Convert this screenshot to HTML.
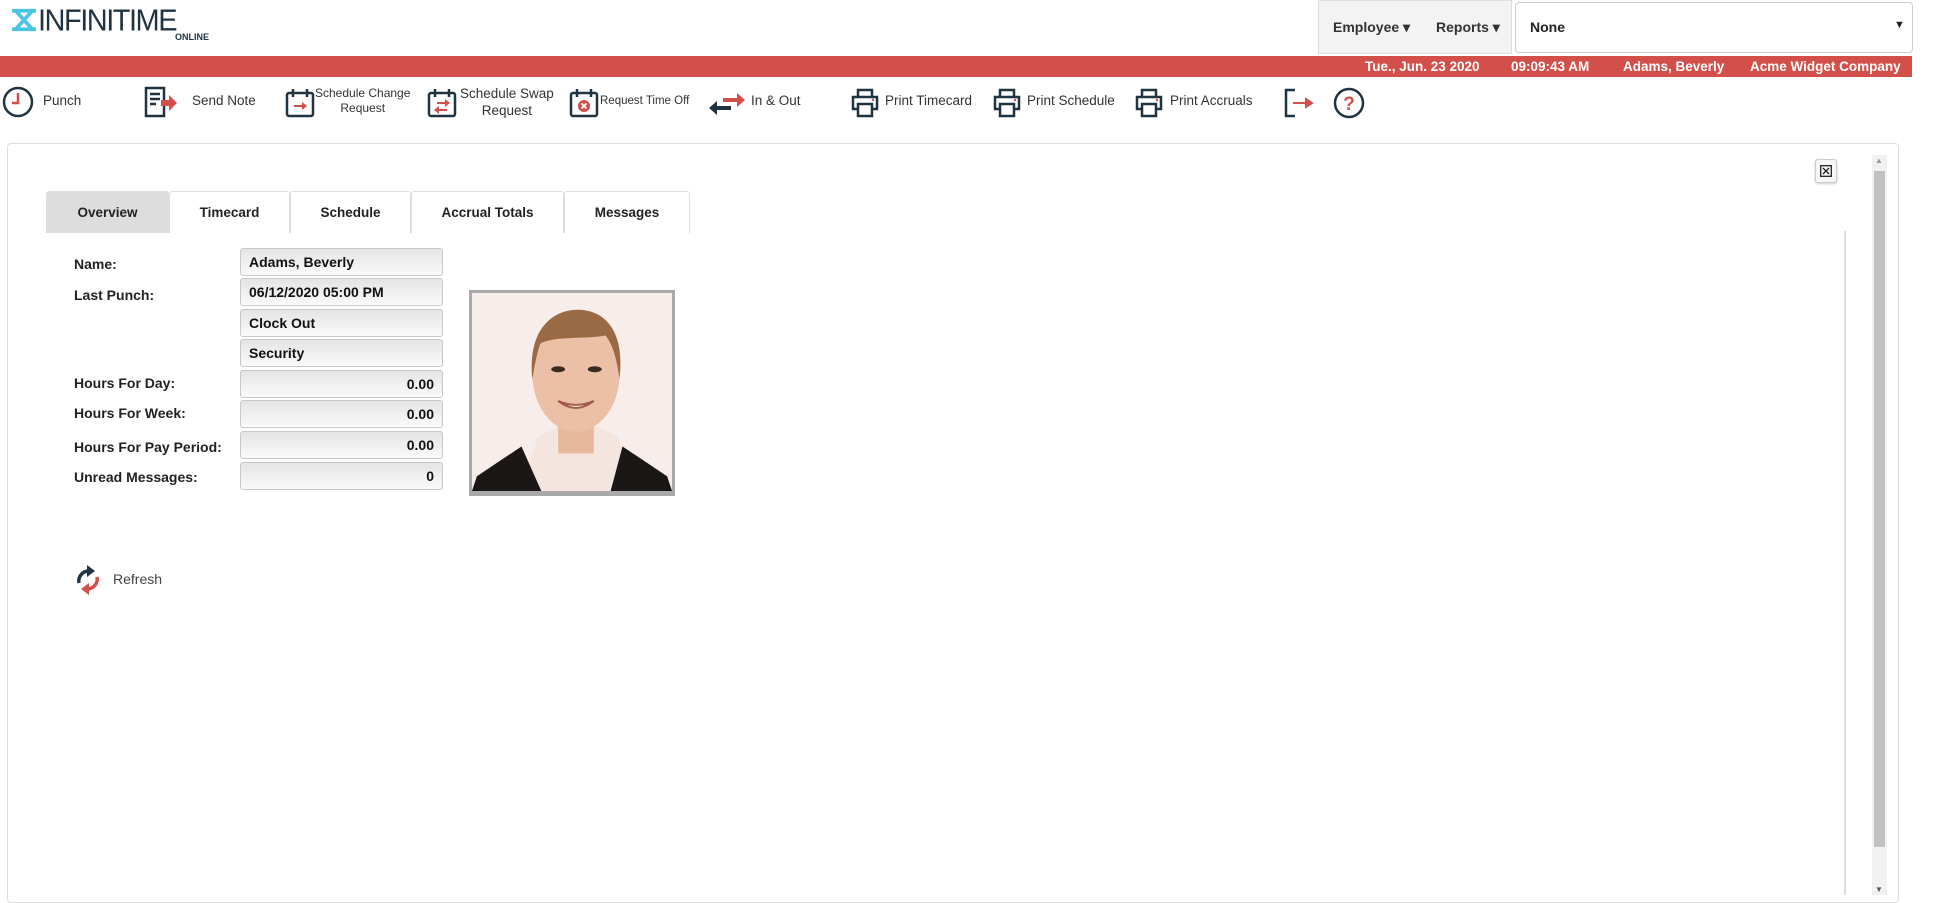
<!DOCTYPE html>
<html><head><meta charset="utf-8">
<style>
*{box-sizing:border-box;margin:0;padding:0}
body{width:1935px;height:895px;overflow:hidden;background:#fff;font-family:"Liberation Sans",sans-serif;color:#222;position:relative}
.a{position:absolute}
.tb{font-size:13.5px;color:#333;white-space:nowrap}
.lbl{position:absolute;left:74px;font-size:14px;font-weight:bold;color:#222}
.fld{position:absolute;left:240px;width:203px;height:28px;border:1px solid #c8c8c8;border-radius:3px;background:linear-gradient(#e4e4e4,#fafafa);font-size:14px;font-weight:bold;line-height:26px;padding:0 8px;color:#111}
.r{text-align:right}
.tab{position:absolute;top:191px;height:42px;border:1px solid #ddd;border-bottom:none;border-radius:3px 3px 0 0;font-size:13.5px;font-weight:bold;text-align:center;line-height:42px;background:#fff}
svg.i{position:absolute}
</style></head><body>
<!-- logo -->
<div class="a" style="left:10px;top:8px;">
<svg width="28" height="24" viewBox="0 0 30 26"><path d="M2 3h26M2 23h26M6 3l9 10 9-10M6 23l9-10 9 10" stroke="#4cc3e6" stroke-width="4" fill="none"/></svg>
</div>
<div class="a" style="left:38px;top:5px;font-size:29px;color:#1f3340;letter-spacing:-1.5px;transform:scaleY(1.05)">INFINITIME</div>
<div class="a" style="left:175px;top:32px;font-size:9px;font-weight:bold;color:#1f3340">ONLINE</div>
<!-- header nav -->
<div class="a" style="left:1318px;top:0;width:194px;height:54px;background:#f3f3f3;border:1px solid #ddd"></div>
<div class="a" style="left:1333px;top:19px;font-size:14px;font-weight:bold;color:#333">Employee ▾</div>
<div class="a" style="left:1436px;top:19px;font-size:14px;font-weight:bold;color:#333">Reports ▾</div>
<div class="a" style="left:1515px;top:2px;width:398px;height:51px;border:1px solid #ccc;border-radius:4px"></div>
<div class="a" style="left:1530px;top:19px;font-size:14px;font-weight:bold;color:#222">None</div>
<div class="a" style="left:1894px;top:19px;font-size:11px;color:#222">▼</div>
<!-- red bar -->
<div class="a" style="left:0;top:56px;width:1912px;height:21px;background:#d24f4a"></div>
<div class="a" style="left:1365px;top:59px;font-size:13.5px;font-weight:bold;color:#fff;white-space:nowrap">Tue., Jun. 23 2020</div>
<div class="a" style="left:1511px;top:59px;font-size:13.5px;font-weight:bold;color:#fff">09:09:43 AM</div>
<div class="a" style="left:1623px;top:59px;font-size:13.5px;font-weight:bold;color:#fff">Adams, Beverly</div>
<div class="a" style="left:1750px;top:59px;font-size:13.5px;font-weight:bold;color:#fff">Acme Widget Company</div>
<!-- toolbar -->
<svg class="i" style="left:2px;top:86px" width="32" height="32" viewBox="0 0 32 32"><circle cx="16" cy="16" r="14" fill="none" stroke="#1f3340" stroke-width="2.5"/><path d="M16 7v10h-6" stroke="#d24f4a" stroke-width="2.5" fill="none"/></svg>
<div class="a tb" style="left:43px;top:93px">Punch</div>
<svg class="i" style="left:143px;top:86px" width="40" height="32" viewBox="0 0 40 32"><path d="M3 2h18v28H3z" fill="none" stroke="#1f3340" stroke-width="2.5"/><path d="M7 8h10M7 13h10M7 18h6" stroke="#1f3340" stroke-width="2.5"/><path d="M18 14h8v-5l8 8-8 8v-5h-8z" fill="#d24f4a"/></svg>
<div class="a tb" style="left:192px;top:93px">Send Note</div>
<svg class="i" style="left:285px;top:88px" width="30" height="30" viewBox="0 0 30 30"><rect x="2" y="5" width="26" height="23" rx="2" fill="none" stroke="#1f3340" stroke-width="2.5"/><path d="M8 1v8M22 1v8" stroke="#1f3340" stroke-width="2.5"/><path d="M9 17h8v-3l5 4-5 4v-3H9z" fill="#d24f4a"/></svg>
<div class="a tb" style="left:315px;top:86px;font-size:12px;text-align:center;line-height:15px">Schedule Change<br>Request</div>
<svg class="i" style="left:427px;top:88px" width="30" height="30" viewBox="0 0 30 30"><rect x="2" y="5" width="26" height="23" rx="2" fill="none" stroke="#1f3340" stroke-width="2.5"/><path d="M8 1v8M22 1v8" stroke="#1f3340" stroke-width="2.5"/><path d="M10 14h8v-3l5 4-5 4v-3h-8zM20 23h-8v3l-5-4 5-4v3h8z" fill="#d24f4a"/></svg>
<div class="a tb" style="left:460px;top:85px;text-align:center;line-height:17px">Schedule Swap<br>Request</div>
<svg class="i" style="left:569px;top:88px" width="30" height="30" viewBox="0 0 30 30"><rect x="2" y="5" width="26" height="23" rx="2" fill="none" stroke="#1f3340" stroke-width="2.5"/><path d="M8 1v8M22 1v8" stroke="#1f3340" stroke-width="2.5"/><circle cx="15" cy="18" r="6" fill="#d24f4a"/><path d="M12.5 15.5l5 5M17.5 15.5l-5 5" stroke="#fff" stroke-width="1.8"/></svg>
<div class="a tb" style="left:600px;top:95px;font-size:11.5px">Request Time Off</div>
<svg class="i" style="left:709px;top:92px" width="36" height="24" viewBox="0 0 36 24"><path d="M14 6h14V1l8 7-8 7v-5H14z" fill="#d24f4a"/><path d="M22 14H8V9l-8 7 8 7v-5h14z" fill="#1f3340"/></svg>
<div class="a tb" style="left:751px;top:93px">In &amp; Out</div>
<svg class="i" style="left:850px;top:87px" width="30" height="32" viewBox="0 0 30 32"><path d="M8 9V3h14v6M8 22H3V10h24v12h-5" fill="none" stroke="#1f3340" stroke-width="2.5"/><rect x="8" y="17" width="14" height="12" fill="none" stroke="#1f3340" stroke-width="2.5"/><circle cx="23" cy="13" r="1.2" fill="#d24f4a"/></svg>
<div class="a tb" style="left:885px;top:93px">Print Timecard</div>
<svg class="i" style="left:992px;top:87px" width="30" height="32" viewBox="0 0 30 32"><path d="M8 9V3h14v6M8 22H3V10h24v12h-5" fill="none" stroke="#1f3340" stroke-width="2.5"/><rect x="8" y="17" width="14" height="12" fill="none" stroke="#1f3340" stroke-width="2.5"/><circle cx="23" cy="13" r="1.2" fill="#d24f4a"/></svg>
<div class="a tb" style="left:1027px;top:93px">Print Schedule</div>
<svg class="i" style="left:1134px;top:87px" width="30" height="32" viewBox="0 0 30 32"><path d="M8 9V3h14v6M8 22H3V10h24v12h-5" fill="none" stroke="#1f3340" stroke-width="2.5"/><rect x="8" y="17" width="14" height="12" fill="none" stroke="#1f3340" stroke-width="2.5"/><circle cx="23" cy="13" r="1.2" fill="#d24f4a"/></svg>
<div class="a tb" style="left:1170px;top:93px">Print Accruals</div>
<svg class="i" style="left:1284px;top:88px" width="30" height="30" viewBox="0 0 30 30"><path d="M11 2H2v26h9" fill="none" stroke="#1f3340" stroke-width="2.5"/><path d="M9 15h13v-4l6 4-6 4v-4" fill="#d24f4a" stroke="#d24f4a" stroke-width="2"/></svg>
<svg class="i" style="left:1333px;top:87px" width="32" height="32" viewBox="0 0 32 32"><circle cx="16" cy="16" r="14" fill="none" stroke="#1f3340" stroke-width="2.5"/><text x="16" y="23" text-anchor="middle" font-family="Liberation Sans" font-weight="bold" font-size="19" fill="#d24f4a">?</text></svg>
<!-- panel -->
<div class="a" style="left:7px;top:143px;width:1892px;height:760px;border:1px solid #ddd;border-radius:4px"></div>
<div class="a" style="left:1872px;top:155px;width:15px;height:740px;background:#f1f1f1"></div>
<div class="a" style="left:1874px;top:171px;width:11px;height:676px;background:#c1c1c1"></div>
<div class="a" style="left:1875px;top:156px;font-size:8px;color:#999">▲</div>
<div class="a" style="left:1875px;top:885px;font-size:8px;color:#555">▼</div>
<div class="a" style="left:1815px;top:159px;width:22px;height:24px;border:1px solid #ccc;border-radius:3px;background:#f6f6f6;box-shadow:0 1px 2px #ccc"></div>
<svg class="i" style="left:1820px;top:165px" width="12" height="12" viewBox="0 0 12 12"><rect x="0.7" y="0.7" width="10.6" height="10.6" fill="none" stroke="#222" stroke-width="1.3"/><path d="M3 3l6 6M9 3l-6 6" stroke="#222" stroke-width="1.3"/></svg>
<div class="a" style="left:1844px;top:231px;width:2px;height:664px;background:#ddd"></div>
<!-- tabs -->
<div class="tab" style="left:46px;width:123px;background:#ddd;border-color:#ddd">Overview</div>
<div class="tab" style="left:169px;width:121px">Timecard</div>
<div class="tab" style="left:290px;width:121px">Schedule</div>
<div class="tab" style="left:411px;width:153px">Accrual Totals</div>
<div class="tab" style="left:564px;width:126px">Messages</div>
<!-- fields -->
<div class="lbl" style="top:256px">Name:</div>
<div class="lbl" style="top:287px">Last Punch:</div>
<div class="lbl" style="top:375px">Hours For Day:</div>
<div class="lbl" style="top:405px">Hours For Week:</div>
<div class="lbl" style="top:439px">Hours For Pay Period:</div>
<div class="lbl" style="top:469px">Unread Messages:</div>
<div class="fld" style="top:248px">Adams, Beverly</div>
<div class="fld" style="top:278px">06/12/2020 05:00 PM</div>
<div class="fld" style="top:309px">Clock Out</div>
<div class="fld" style="top:339px">Security</div>
<div class="fld r" style="top:370px">0.00</div>
<div class="fld r" style="top:400px">0.00</div>
<div class="fld r" style="top:431px">0.00</div>
<div class="fld r" style="top:462px">0</div>
<!-- photo -->
<svg class="i" style="left:469px;top:290px" width="206" height="206" viewBox="0 0 208 208">
<rect width="208" height="208" fill="#a9a9a9"/><rect x="3" y="3" width="202" height="200" fill="#f7eeec"/>
<path d="M50 203l20-55 40-20 40 20 20 55z" fill="#f4e6de"/>
<path d="M3 203l5-15 45-30 20 45zM205 203l-5-15-45-30-12 45z" fill="#1b1717"/>
<rect x="90" y="130" width="36" height="35" fill="#e7b89a"/>
<ellipse cx="108" cy="85" rx="44" ry="58" fill="#ecc0a6"/>
<path d="M64 90c-5-50 20-70 46-70s48 20 42 70c-4-30-10-38-14-44-20 4-50 0-66 8-4 12-6 24-8 36z" fill="#9a6a45"/>
<ellipse cx="90" cy="80" rx="7" ry="3" fill="#3a2a22"/><ellipse cx="127" cy="80" rx="7" ry="3" fill="#3a2a22"/>
<path d="M90 112q18 14 36 0q-18 8-36 0z" fill="#fff" stroke="#a25a4a" stroke-width="2"/>
</svg>
<!-- refresh -->
<svg class="i" style="left:73px;top:563px" width="30" height="34" viewBox="0 0 30 34"><path d="M6 20A10 10 0 0 1 16 8" fill="none" stroke="#1f3340" stroke-width="3.5"/><path d="M14 2l8 6-8 6z" fill="#1f3340"/><path d="M24 14A10 10 0 0 1 14 26" fill="none" stroke="#d24f4a" stroke-width="3.5"/><path d="M16 20l-8 6 8 6z" fill="#d24f4a"/></svg>
<div class="a" style="left:113px;top:571px;font-size:14px;color:#444">Refresh</div>
</body></html>
